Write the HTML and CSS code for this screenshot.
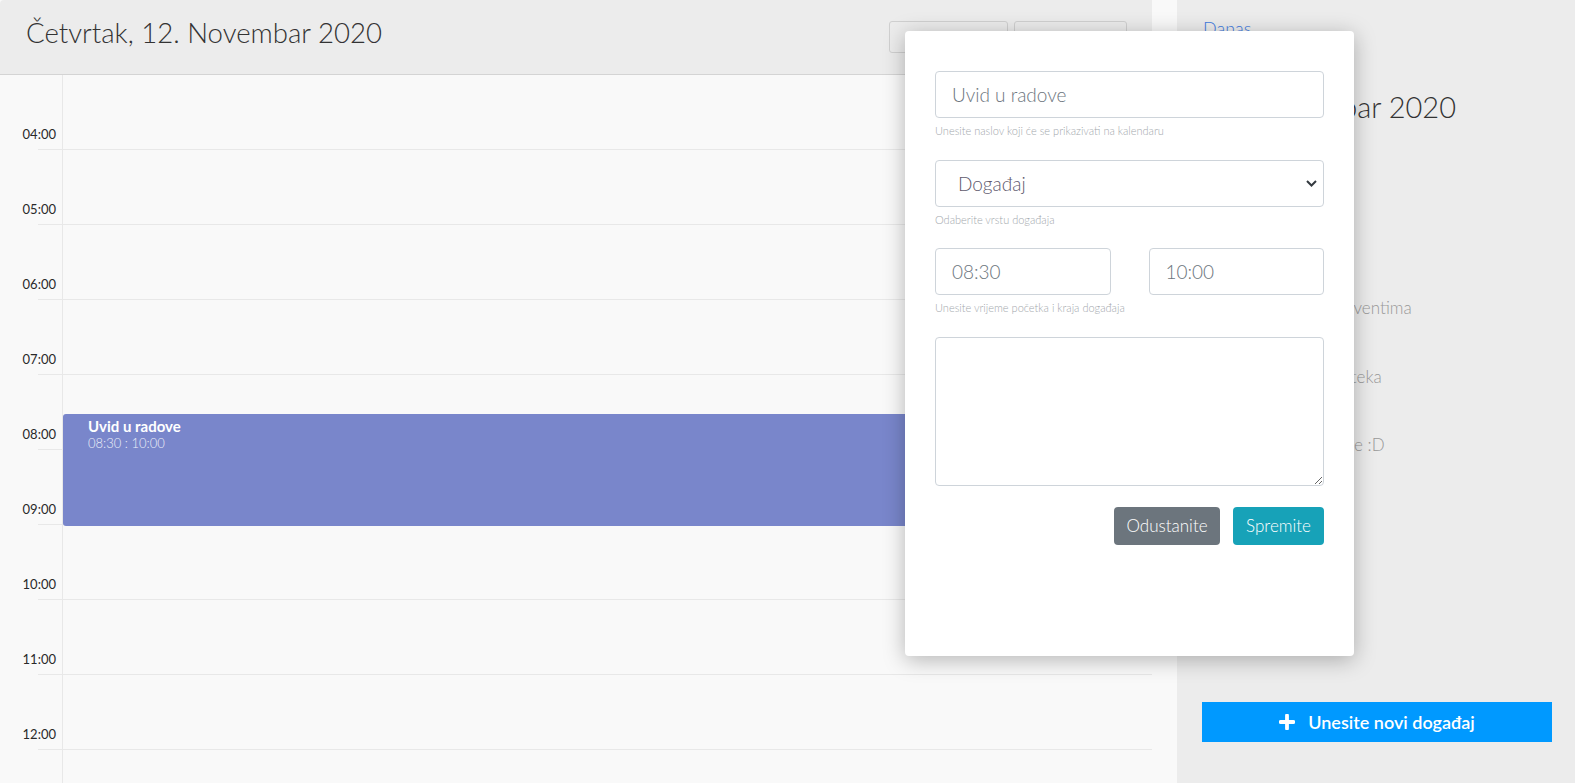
FILE: index.html
```html
<!DOCTYPE html>
<html lang="hr">
<head>
<meta charset="utf-8">
<title>Kalendar</title>
<link rel="stylesheet" href="styles.css">
</head>
<body>
<div class="app">
  <section class="calendar">
    <header class="cal-header">
      <h1 class="cal-title">Četvrtak, 12. Novembar 2020</h1>
      <div class="cal-nav">
        <button class="nav-btn nav-prev">Prethodni</button>
        <button class="nav-btn nav-next">Sljedeći</button>
      </div>
    </header>
    <div class="cal-body">
      <div class="row"><div class="time">04:00</div><div class="slot"></div></div>
      <div class="row"><div class="time">05:00</div><div class="slot"></div></div>
      <div class="row"><div class="time">06:00</div><div class="slot"></div></div>
      <div class="row"><div class="time">07:00</div><div class="slot"></div></div>
      <div class="row"><div class="time">08:00</div><div class="slot"></div></div>
      <div class="row"><div class="time">09:00</div><div class="slot"></div></div>
      <div class="row"><div class="time">10:00</div><div class="slot"></div></div>
      <div class="row"><div class="time">11:00</div><div class="slot"></div></div>
      <div class="row"><div class="time">12:00</div><div class="slot"></div></div>
      <div class="row"><div class="time"></div><div class="slot"></div></div>
      <div class="event">
        <div class="event-title">Uvid u radove</div>
        <div class="event-time">08:30 : 10:00</div>
      </div>
    </div>
  </section>

  <aside class="side">
    <a class="today" href="#">Danas</a>
    <div class="side-date">12. Novembar 2020</div>
    <ul class="side-list">
      <li>Konsultacije sa apsolventima</li>
      <li>Univerzitetska biblioteka</li>
      <li>Kafa s ekipom iz škole :D</li>
    </ul>
    <button class="new-event">
      <svg class="plus" width="16" height="16" viewBox="0 0 16 16"><path d="M8 1.5v13M1.5 8h13" stroke="#fff" stroke-width="3.8" stroke-linecap="round"/></svg>
      <span>Unesite novi događaj</span>
    </button>
  </aside>

  <div class="modal">
    <div class="field">
      <input class="input" type="text" value="Uvid u radove">
      <div class="help">Unesite naslov koji će se prikazivati na kalendaru</div>
    </div>
    <div class="field">
      <div class="input select">
        <span>Događaj</span>
        <svg width="11" height="7" viewBox="0 0 11 7"><path d="M1 1l4.5 4.5L10 1" fill="none" stroke="#343a40" stroke-width="2"/></svg>
      </div>
      <div class="help">Odaberite vrstu događaja</div>
    </div>
    <div class="field">
      <div class="times">
        <input class="input" type="text" value="08:30">
        <input class="input" type="text" value="10:00">
      </div>
      <div class="help">Unesite vrijeme početka i kraja događaja</div>
    </div>
    <div class="field field-last">
      <textarea class="textarea"></textarea>
    </div>
    <div class="actions">
      <button class="btn btn-gray">Odustanite</button>
      <button class="btn btn-teal">Spremite</button>
    </div>
  </div>
</div>
</body>
</html>
```

FILE: styles.css
```css
html, body {
  margin: 0;
  padding: 0;
}
body {
  font-family: Lato, "Open Sans", sans-serif;
  background: #ececec;
  overflow: hidden;
}
.app {
  position: relative;
  display: flex;
  width: 1575px;
  height: 783px;
}

/* calendar column */
.calendar {
  width: 1177px;
  flex: none;
  background: #f9f9f9;
  padding-right: 25px;
  box-sizing: border-box;
  display: flex;
  flex-direction: column;
}
.cal-header {
  height: 75px;
  flex: none;
  box-sizing: border-box;
  background: #ececec;
  border-bottom: 1px solid #d4d4d4;
  border-top-left-radius: 4px;
  display: flex;
  justify-content: space-between;
  align-items: flex-start;
  padding: 16px 25px 0 26px;
}
.cal-title {
  margin: 0;
  font-size: 27.6px;
  font-weight: 300;
  line-height: 1.2;
  color: #333;
}
.cal-nav {
  display: flex;
  gap: 6px;
  margin-top: 5px;
}
.nav-btn {
  height: 32px;
  border: 1px solid #d0d0d0;
  border-radius: 3px;
  background: #ececec;
  font-family: Lato, sans-serif;
  font-size: 14px;
  color: #555;
}
.nav-prev {
  width: 119px;
}
.nav-next {
  width: 113px;
}
.cal-body {
  position: relative;
  flex: 1;
  overflow: hidden;
}
.row {
  height: 75px;
  box-sizing: border-box;
  margin-left: 38px;
  border-bottom: 1px solid #e8e8e8;
  display: flex;
}
.time {
  width: 18px;
  padding-right: 6px;
  padding-bottom: 6px;
  display: flex;
  justify-content: flex-end;
  align-items: flex-end;
  font-size: 13px;
  line-height: 1.2;
  color: #2a2a2a;
  white-space: nowrap;
}
.slot {
  flex: 1;
  border-left: 1px solid #e8e8e8;
}
.event {
  position: absolute;
  left: 63px;
  right: 0;
  top: 339px;
  height: 112px;
  background: #7986cb;
  border-radius: 3px;
  padding: 3px 0 0 25px;
  box-sizing: border-box;
  color: #fff;
}
.event-title {
  font-size: 15px;
  font-weight: 700;
  line-height: 18px;
}
.event-time {
  font-size: 13px;
  font-weight: 300;
  line-height: 16px;
  color: #eceef8;
}

/* side panel */
.side {
  flex: 1;
  background: #ececec;
  display: flex;
  flex-direction: column;
  padding: 18px 23px 41px 25px;
  box-sizing: border-box;
}
.today {
  align-self: flex-start;
  margin-left: 1px;
  color: #3f7be0;
  font-size: 18px;
  font-weight: 300;
  line-height: 1.2;
  text-decoration: none;
}
.side-date {
  margin: 50px 0 0 1px;
  font-size: 29px;
  font-weight: 300;
  line-height: 1.2;
  color: #333;
}
.side-list {
  list-style: none;
  margin: 174px 0 0 1px;
  padding: 0;
}
.side-list li {
  font-size: 17px;
  font-weight: 300;
  line-height: 1.2;
  color: #999;
  margin-bottom: 48px;
}
.new-event {
  margin-top: auto;
  height: 40px;
  width: 350px;
  background: #0099ff;
  border: none;
  color: #fff;
  font-family: Lato, sans-serif;
  font-size: 18px;
  font-weight: 600;
  display: flex;
  align-items: center;
  justify-content: center;
  gap: 13px;
  padding: 0;
}

/* modal */
.modal {
  position: absolute;
  left: 905px;
  top: 31px;
  width: 449px;
  height: 625px;
  background: #fff;
  border-radius: 4px;
  box-shadow: 0 4px 22px rgba(0, 0, 0, 0.28);
  padding: 40px 30px;
  box-sizing: border-box;
}
.field {
  margin-bottom: 21.5px;
}
.field-last {
  margin-bottom: 21px;
}
.input {
  display: block;
  width: 100%;
  height: 47px;
  box-sizing: border-box;
  border: 1px solid #ced4da;
  border-radius: 4px;
  padding: 0 16px;
  font-family: Lato, sans-serif;
  font-size: 19px;
  font-weight: 300;
  color: #6c757d;
  background: #fff;
}
.select {
  display: flex;
  align-items: center;
  justify-content: space-between;
  padding: 0 6px 0 22px;
  color: #5f5a6e;
  font-size: 19px;
}
.help {
  margin-top: 5px;
  font-size: 11px;
  line-height: 15px;
  font-weight: 300;
  color: #a3a8ad;
}
.times {
  display: grid;
  grid-template-columns: 1fr 1fr;
  gap: 38px;
}
.textarea {
  display: block;
  width: 100%;
  height: 149px;
  box-sizing: border-box;
  border: 1px solid #ced4da;
  border-radius: 4px;
  font-family: Lato, sans-serif;
}
.actions {
  display: flex;
  justify-content: flex-end;
  gap: 13px;
}
.btn {
  height: 38px;
  border: none;
  border-radius: 4px;
  color: #fff;
  font-family: Lato, sans-serif;
  font-size: 17px;
  font-weight: 300;
  padding: 0;
}
.btn-gray {
  background: #6c757d;
  width: 106px;
}
.btn-teal {
  background: #17a2b8;
  width: 91px;
}
```
